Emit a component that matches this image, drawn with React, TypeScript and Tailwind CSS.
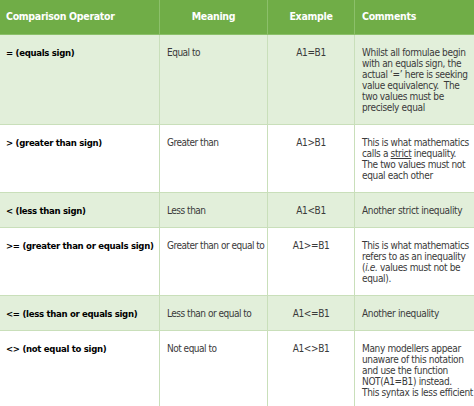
import React from "react";

type Row = {
  op: string;
  meaning: React.ReactNode;
  ex: string;
  comment: React.ReactNode;
  green: boolean;
};

const rows: Row[] = [
  {
    op: "= (equals sign)",
    meaning: "Equal to",
    ex: "A1=B1",
    comment: (
      <>
        Whilst all formulae begin
        <br />
        with an equals sign, the
        <br />
        actual ‘=’ here is seeking
        <br />
        value equivalency.&nbsp; The
        <br />
        two values must be
        <br />
        precisely equal
      </>
    ),
    green: true,
  },
  {
    op: "> (greater than sign)",
    meaning: "Greater than",
    ex: "A1>B1",
    comment: (
      <>
        This is what mathematics
        <br />
        calls a <span className="underline">strict</span> inequality.
        <br />
        The two values must not
        <br />
        equal each other
      </>
    ),
    green: false,
  },
  {
    op: "< (less than sign)",
    meaning: "Less than",
    ex: "A1<B1",
    comment: "Another strict inequality",
    green: true,
  },
  {
    op: ">= (greater than or equals sign)",
    meaning: "Greater than or equal to",
    ex: "A1>=B1",
    comment: (
      <>
        This is what mathematics
        <br />
        refers to as an inequality
        <br />(<span className="italic">i.e.</span> values must not be
        <br />
        equal).
      </>
    ),
    green: false,
  },
  {
    op: "<= (less than or equals sign)",
    meaning: "Less than or equal to",
    ex: "A1<=B1",
    comment: "Another inequality",
    green: true,
  },
  {
    op: "<> (not equal to sign)",
    meaning: "Not equal to",
    ex: "A1<>B1",
    comment: (
      <>
        Many modellers appear
        <br />
        unaware of this notation
        <br />
        and use the function
        <br />
        NOT(A1=B1) instead.
        <br />
        This syntax is less efficient
      </>
    ),
    green: false,
  },
];

export default function App() {
  return (
    <div
      className="w-[474px] h-[406px] overflow-hidden bg-white"
      style={{ fontFamily: '"DejaVu Sans Condensed", "DejaVu Sans", Verdana, sans-serif' }}
    >
      <div className="grid grid-cols-[159px_108px_87px_120px] h-[35px] bg-[#70ad47] text-white font-bold text-[10.5px] tracking-[-0.3px] border-b border-[#8cc06a]">
        <div className="flex items-center pl-[6px]">Comparison Operator</div>
        <div className="flex items-center justify-center border-l border-[#8cc06a]">Meaning</div>
        <div className="flex items-center justify-center border-l border-[#8cc06a]">Example</div>
        <div className="flex items-center pl-[7px] border-l border-[#8cc06a]">Comments</div>
      </div>
      {rows.map((r, i) => (
        <div
          key={i}
          className={`grid grid-cols-[159px_108px_87px_120px] border-b border-[#c9dfba] text-[10px] leading-[11px] tracking-[-0.35px] ${
            r.green ? "bg-[#e2efda]" : "bg-white"
          }`}
        >
          <div className="pl-[6px] pt-[12px] pb-[11px] font-bold text-black whitespace-nowrap text-[9.5px] tracking-[-0.3px]">
            {r.op}
          </div>
          <div className="pl-[7px] pt-[12px] pb-[11px] text-[#3a3a3a] border-l border-[#c9dfba] whitespace-nowrap tracking-[-0.5px]">
            {r.meaning}
          </div>
          <div className="pt-[12px] pb-[11px] text-center text-[#3a3a3a] border-l border-[#c9dfba] whitespace-nowrap">
            {r.ex}
          </div>
          <div className="pl-[7px] pt-[12px] pb-[11px] text-[#3a3a3a] border-l border-[#c9dfba] whitespace-nowrap">
            {r.comment}
          </div>
        </div>
      ))}
    </div>
  );
}
